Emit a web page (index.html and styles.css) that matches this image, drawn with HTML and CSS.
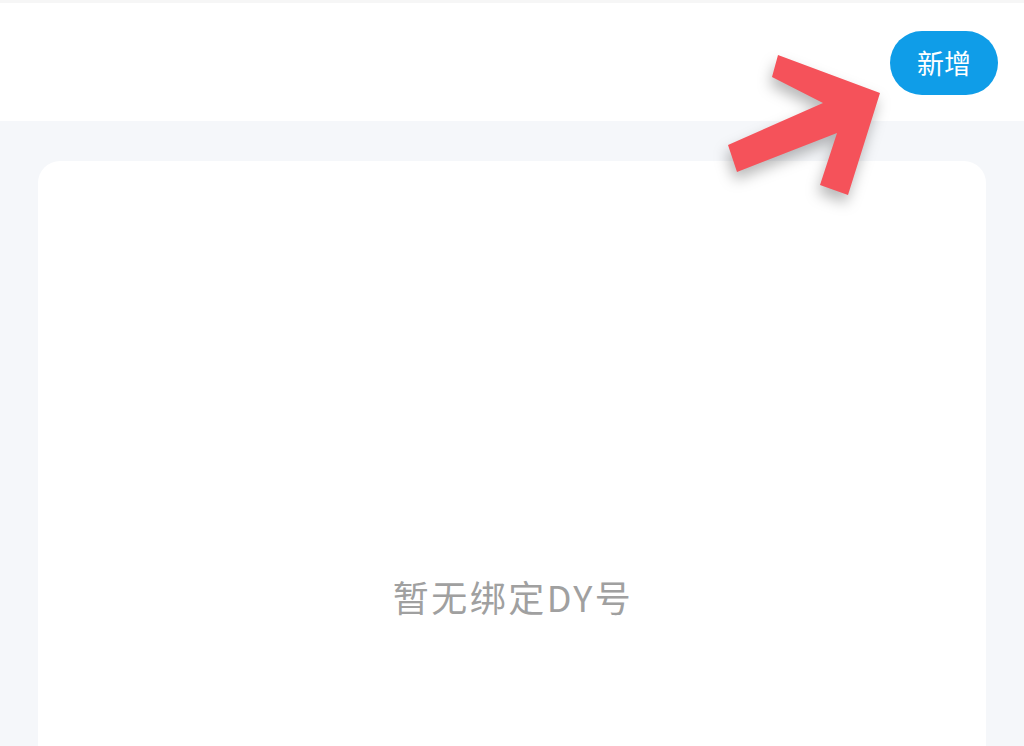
FILE: index.html
```html
<!DOCTYPE html>
<html lang="zh">
<head>
<meta charset="utf-8">
<title>DY号</title>
<link rel="stylesheet" href="styles.css">
</head>
<body>
<div class="page">
  <header class="header">
    <button class="add-btn">新增</button>
  </header>
  <main class="main">
    <section class="card">
      <p class="empty">暂无绑定DY号</p>
    </section>
  </main>
  <svg class="arrow" width="200" height="180" viewBox="0 0 200 180" aria-hidden="true">
    <polygon points="58,15 160,53 128,155 100,145 117,93 17,132 8,105 103,63 52,37" fill="#f5525a"/>
  </svg>
</div>
</body>
</html>
```
FILE: styles.css
```css
html, body {
  margin: 0;
  padding: 0;
  height: 100%;
  overflow: hidden;
  background: #f5f7fa;
}
.page {
  position: relative;
  height: 746px;
  overflow: hidden;
  display: flex;
  flex-direction: column;
  font-family: "Noto Sans CJK SC", "Noto Sans", sans-serif;
}
.header {
  background: #ffffff;
  border-top: 3px solid #f6f6f6;
  height: 121px;
  flex: none;
  box-sizing: border-box;
  display: flex;
  justify-content: flex-end;
  align-items: flex-start;
  padding: 28px 26px 0 0;
}
.add-btn {
  width: 108px;
  height: 64px;
  border: none;
  border-radius: 32px;
  background: #0f9de8;
  color: #ffffff;
  font-family: "Noto Sans CJK SC", sans-serif;
  font-size: 27px;
  padding: 0;
  line-height: 64px;
}
.main {
  flex: 1;
  min-height: 0;
  background: #f5f7fa;
  padding: 40px 38px 0;
  display: flex;
  flex-direction: column;
}
.card {
  flex: 1;
  background: #ffffff;
  border-radius: 22px 22px 0 0;
  text-align: center;
  padding-top: 415px;
}
.empty {
  margin: 0;
  padding-left: 2px;
  font-size: 36px;
  line-height: 40px;
  letter-spacing: 2.5px;
  color: #a0a0a0;
}
.arrow {
  position: absolute;
  left: 720px;
  top: 40px;
  filter: drop-shadow(-2px 8px 7px rgba(0, 0, 0, 0.28));
}
```
